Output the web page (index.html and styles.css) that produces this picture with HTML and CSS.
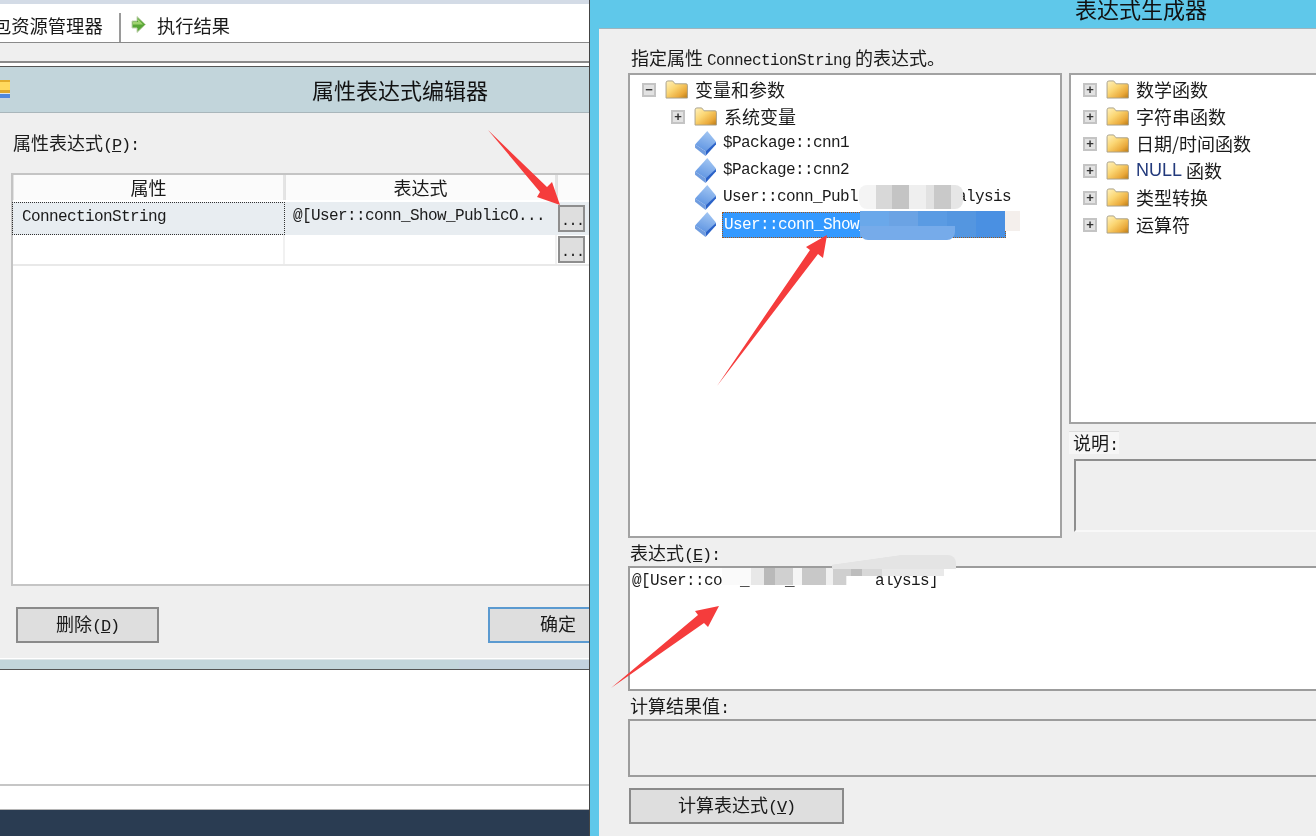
FILE: index.html
```html
<!DOCTYPE html>
<html lang="zh-CN">
<head>
<meta charset="utf-8">
<title>属性表达式编辑器 / 表达式生成器</title>
<link rel="stylesheet" href="styles.css">
</head>
<body>
<svg class="defs" width="0" height="0" aria-hidden="true">
  <defs>
    <linearGradient id="fold" x1="0" y1="0" x2="1" y2="1">
      <stop offset="0" stop-color="#fff2bf"/><stop offset=".4" stop-color="#fbd673"/><stop offset=".75" stop-color="#eaa93a"/><stop offset="1" stop-color="#b97a14"/>
    </linearGradient>
    <linearGradient id="face" x1="0.700" y1="0" x2="0.300" y2="1">
      <stop offset="0" stop-color="#a5c8f3"/><stop offset="1" stop-color="#5e94e2"/>
    </linearGradient>
    <symbol id="folder" viewBox="0 0 24 20">
      <path d="M1 19V3q0-2 2-2h5l2.500 3H22q1.500 0 1.500 1.500V19z" fill="url(#fold)" stroke="#a8a08a" stroke-width="1"/>
    </symbol>
    <symbol id="cube" viewBox="0 0 20 24">
      <path d="M11.700 0L20 10v1L10 19.500 0 13z" fill="url(#face)"/>
      <path d="M20 10.500V13L10 24v-4.500z" fill="#2a62c8"/>
      <path d="M0 13l10 6.500V24L0 16z" fill="#6f9cdf"/>
    </symbol>
  </defs>
</svg>
<main class="screen">
  <section class="editor">
    <div class="strip"></div>
    <div class="tabs">
      <span class="tab tab-first">包资源管理器</span>
      <span class="tab tab-second">
        <svg class="go" viewBox="0 0 15 17"><path d="M6 .5L14.500 8.500 6 16.500V12H1V5h5z" fill="#58a636" stroke="#c6d4b4"/><path d="M7 3l5 5.500H2V6h5z" fill="#9fd36f"/></svg>
        执行结果
      </span>
    </div>
    <div class="toolbar"></div>
    <div class="gap"></div>
    <div class="dialog">
      <header class="dialog-title">
        <span class="dialog-icon"></span>
        <span class="dialog-name">属性表达式编辑器</span>
      </header>
      <div class="dialog-body">
        <div class="label-main">属性表达式<span class="paren">(<u>P</u>):</span></div>
        <div class="table">
          <div class="row row-head">
            <div class="cell">属性</div>
            <div class="cell">表达式</div>
            <div class="cell"></div>
          </div>
          <div class="row row-sel">
            <div class="cell cell-focus">ConnectionString</div>
            <div class="cell cell-exp">@[User::conn_Show_PublicO...</div>
            <div class="cell cell-btn"><span class="dots">...</span></div>
          </div>
          <div class="row row-empty">
            <div class="cell"></div>
            <div class="cell"></div>
            <div class="cell cell-btn"><span class="dots">...</span></div>
          </div>
        </div>
        <div class="actions">
          <button class="btn btn-del">删除<span class="paren">(<u>D</u>)</span></button>
          <button class="btn btn-ok">确定</button>
        </div>
      </div>
      <div class="dialog-foot"></div>
    </div>
    <div class="output"></div>
    <div class="status"></div>
    <div class="taskbar"></div>
  </section>

  <section class="builder">
    <div class="builder-title"><span>表达式生成器</span></div>
    <div class="builder-body">
      <div class="lab lab-top">指定属性 <span class="mono">ConnectionString</span> 的表达式。</div>
      <div class="panes">
        <div class="tree tree-left">
          <div class="node lvl0"><span class="exp">−</span><svg class="ico-folder"><use href="#folder"/></svg>变量和参数</div>
          <div class="node lvl1"><span class="exp">+</span><svg class="ico-folder"><use href="#folder"/></svg>系统变量</div>
          <div class="node lvl2"><svg class="ico-cube"><use href="#cube"/></svg><span class="mono">$Package::cnn1</span></div>
          <div class="node lvl2"><svg class="ico-cube"><use href="#cube"/></svg><span class="mono">$Package::cnn2</span></div>
          <div class="node lvl2"><svg class="ico-cube"><use href="#cube"/></svg><span class="mono">User::conn_Publ<span class="hidden-gap"></span>alysis</span></div>
          <div class="node lvl2"><svg class="ico-cube"><use href="#cube"/></svg><span class="mono selected">User::conn_Show_</span></div>
        </div>
        <div class="side">
          <div class="tree tree-right">
            <div class="node"><span class="exp">+</span><svg class="ico-folder"><use href="#folder"/></svg>数学函数</div>
            <div class="node"><span class="exp">+</span><svg class="ico-folder"><use href="#folder"/></svg>字符串函数</div>
            <div class="node"><span class="exp">+</span><svg class="ico-folder"><use href="#folder"/></svg>日期/时间函数</div>
            <div class="node"><span class="exp">+</span><svg class="ico-folder"><use href="#folder"/></svg><span class="null">NULL</span>&nbsp;函数</div>
            <div class="node"><span class="exp">+</span><svg class="ico-folder"><use href="#folder"/></svg>类型转换</div>
            <div class="node"><span class="exp">+</span><svg class="ico-folder"><use href="#folder"/></svg>运算符</div>
          </div>
          <div class="desc-label">说明<span class="paren">:</span></div>
          <div class="desc-box"></div>
        </div>
      </div>
      <div class="lab lab-exp">表达式<span class="paren">(<u>E</u>):</span></div>
      <div class="expr mono">@[User::co  _    _         alysis]</div>
      <div class="lab lab-res">计算结果值<span class="paren">:</span></div>
      <div class="result"></div>
      <button class="btn btn-eval">计算表达式<span class="paren">(<u>V</u>)</span></button>
    </div>
  </section>

  <div class="mosaic m-row3"></div>
  <div class="mosaic m-row4"></div>
  <div class="mosaic m-row4b"></div>
  <div class="mosaic m-row4c"></div>
  <div class="mosaic m-expr"></div>
  <div class="mosaic m-expr-top"></div>

  <svg class="arrows" viewBox="0 0 1316 836">
    <polygon points="488,130 547,187 552,182 560,205 537,197 540,192"/>
    <polygon points="717,386 810,250 806,247 827,235 823,258 818,254"/>
    <polygon points="611,688 698,615 695,611 719,606 708,627 704,623"/>
  </svg>
</main>
</body>
</html>
```
FILE: styles.css
```css
* { box-sizing: border-box; }
html, body { margin: 0; height: 100%; overflow: hidden; background: #5fc8ea; }
body { font-family: "Noto Sans CJK SC", "Liberation Sans", sans-serif; font-size: 18px; color: #1a1a1a; }
u { text-decoration-thickness: 1px; text-underline-offset: 1px; }
.defs { position: absolute; }
.mono { font-family: "Liberation Mono", "Noto Sans CJK SC", monospace; font-size: 16px; letter-spacing: -.6px; }
.paren { font-family: "Liberation Mono", monospace; font-size: 17px; letter-spacing: -1.200px; }

.screen { position: relative; display: flex; width: 1316px; height: 836px; overflow: hidden; filter: blur(.35px); }

/* left window */
.editor { width: 590px; flex: none; display: flex; flex-direction: column; background: #fff; border-right: 1px solid #444; overflow: hidden; }
.strip { height: 4px; background: #d3dbe6; }
.tabs { height: 39px; display: flex; align-items: center; background: #fff; border-bottom: 1px solid #8a8a8a; }
.tab { display: flex; align-items: center; height: 29px; margin-top: 9px; padding-bottom: 6px; line-height: 24px; white-space: nowrap; }
.tab-first { margin-left: -7px; width: 128px; border-right: 2px solid #9a9a9a; font-size: 18.300px; }
.tab-second { padding-left: 10px; gap: 11px; font-size: 18.300px; }
.go { width: 15px; height: 17px; }
.toolbar { height: 20px; background: #efefef; border-bottom: 2px solid #8a8a8a; }
.gap { height: 3px; background: #fff; }
.dialog { height: 603px; display: flex; flex-direction: column; border-top: 1px solid #555; }
.dialog-title { height: 46px; flex: none; display: flex; align-items: center; background: #c2d5db; border-bottom: 1px solid #a9b6bb; position: relative; padding-left: 312px; }
.dialog-name { font-size: 22px; line-height: 30px; margin-top: -1px; color: #111; }
.dialog-icon { position: absolute; left: 0; top: 13px; width: 10px; height: 19px; background: linear-gradient(#e2ac2c 0 2px, #ffd95e 2px 10px, #dca52c 10px 13px, #dfe6e8 13px 14px, #4f86dc 14px 18px, #c6d2e0 18px); }
.dialog-body { flex: 1; background: #efefef; padding: 0 0 0 11px; display: flex; flex-direction: column; }
.label-main { height: 60px; padding: 16px 0 0 2px; line-height: 27px; }
.table { height: 413px; margin-right: -6px; background: #fff; border: 2px solid #c4c4c4; border-right: 0; flex: none; }
.row { display: grid; grid-template-columns: 272px 272px 40px; }
.row-head { height: 25px; background: #e2e2e2; }
.row-head .cell { background: #fbfbfb; text-align: center; line-height: 25px; border-right: 2px solid #e4e4e4; margin-left: 1px; font-size: 18px; }
.row-sel { height: 33px; margin-top: 2px; background: #e8edf1; }
.row-empty { height: 31px; border-bottom: 2px solid #e9e9e9; }
.row-empty .cell { border-right: 2px solid #f1f1f1; }
.row-empty .cell-btn { border: 0; }
.cell { min-width: 0; overflow: hidden; white-space: nowrap; }
.cell-focus, .cell-exp { font-family: "Liberation Mono", monospace; font-size: 16px; letter-spacing: -.6px; line-height: 29px; }
.cell-focus { border: 1px dotted #333; margin-left: -1px; padding-left: 9px; height: 33px; }
.cell-exp { padding-left: 8px; }
.cell-btn { padding: 3px 0 0 1px; overflow: visible; }
.row-empty .cell-btn { padding-top: 1px; }
.dots { display: block; width: 27px; height: 27px; overflow: visible; padding-left: 1px; background: #dedede; border: 2px solid #8e8e8e; font: 15px/29px "Liberation Mono", monospace; letter-spacing: -1.500px; text-align: left; }
.actions { display: flex; justify-content: space-between; margin-top: 21px; padding-left: 5px; margin-right: -60px; }
.btn { display: block; height: 36px; padding: 0 0 4px; background: #dedede; border: 2px solid #8a8a8a; font: 18px/28px "Noto Sans CJK SC", sans-serif; color: #1a1a1a; }
.btn-del { width: 143px; }
.btn-ok { width: 161px; border-color: #5b9ad0; text-align: left; padding-left: 50px; }
.dialog-foot { height: 10px; flex: none; margin-top: 1px; background: linear-gradient(90deg, #c2d5db 78%, #c4d2de 78%); border-top: 1px solid #dfe6e8; }
.output { height: 117px; border-top: 1px solid #555; border-bottom: 2px solid #c6c6c6; flex: none; }
.status { height: 24px; flex: none; border-bottom: 1px solid #b5b5b5; }
.taskbar { flex: 1; background: #2a3c52; }

/* right window */
.builder { flex: 1; min-width: 0; padding-left: 9px; display: flex; flex-direction: column; background: #5fc8ea; }
.builder-title { height: 28px; flex: none; margin-left: -9px; padding-left: 485px; overflow: hidden; }
.builder-title span { display: block; font-size: 22px; line-height: 22px; margin-top: -3px; color: #111; white-space: nowrap; }
.builder-body { flex: 1; background: #efefef; border-top: 1px solid #9fb4bd; padding-left: 29px; display: flex; flex-direction: column; margin-right: -6px; }
.lab { line-height: 24px; white-space: nowrap; }
.lab-top { height: 44px; padding: 16px 0 0 3px; font-size: 18px; }
.panes { display: flex; gap: 7px; height: 465px; flex: none; }
.tree { background: #fff; border: 2px solid #a2a2a2; padding-top: 1px; }
.tree-left { width: 434px; height: 465px; flex: none; }
.side { flex: 1; min-width: 0; }
.tree-right { height: 351px; }
.node { display: flex; align-items: center; height: 27px; white-space: nowrap; line-height: 27px; }
.exp { width: 14px; height: 14px; flex: none; display: flex; align-items: center; justify-content: center; background: #e2e2e2; border: 2px solid #c4c4c4; font: bold 13px/1 "Liberation Sans", sans-serif; color: #333; margin-right: 9px; }
.ico-folder { width: 23px; height: 19px; flex: none; margin-right: 7px; }
.ico-cube { width: 21px; height: 25px; flex: none; margin-right: 7px; }
.lvl0 { padding-left: 12px; }
.lvl1 { padding-left: 41px; }
.lvl2 { padding-left: 65px; }
.tree-right .node { padding-left: 12px; }
.hidden-gap { display: inline-block; width: 99px; }
.selected { display: block; width: 284px; height: 26px; margin-left: -1px; padding-left: 2px; background: #3399ff; color: #fff; line-height: 26px; outline: 1px dotted #a0561c; outline-offset: -1px; }
.null { font-family: "Liberation Sans", sans-serif; color: #233a7c; }
.desc-label { width: 50px; height: 23px; margin-top: 7px; padding-left: 4px; line-height: 21px; background: #f6f6f6; border-top: 1px solid #dcdcdc; }
.desc-box { height: 73px; margin: 5px 0 0 5px; border: 2px solid #8e8e8e; border-right: 0; border-bottom: 2px solid #f8f8f8; }
.lab-exp { height: 28px; padding: 2px 0 0 2px; }
.expr { height: 125px; flex: none; background: #fff; border: 2px solid #9c9c9c; padding: 2px 0 0 2px; line-height: 22px; white-space: pre; }
.lab-res { height: 28px; padding: 2px 0 0 2px; }
.result { height: 58px; flex: none; border: 2px solid #9c9c9c; }
.btn-eval { width: 215px; height: 36px; margin: 11px 0 0 1px; }

/* overlays */
.mosaic { position: absolute; }
.m-row3 { left: 859px; top: 185px; width: 104px; height: 24px; border-radius: 8px; background: linear-gradient(90deg, #f4f4f4 0 16%, #d8d8d8 16% 32%, #c4c4c4 32% 48%, #efefef 48% 64%, #e2e2e2 64% 72%, #c9c9c9 72% 88%, #e6e6e6 88%); }
.m-row4 { left: 860px; top: 211px; width: 145px; height: 26px; background: linear-gradient(90deg, #6aa8ea 0 20%, #6ba3e4 20% 40%, #5a9be3 40% 60%, #5496e0 60% 80%, #4a90e2 80%); }
.m-row4b { left: 1005px; top: 211px; width: 15px; height: 20px; background: #f4efec; }
.m-row4c { left: 860px; top: 226px; width: 95px; height: 14px; border-radius: 0 0 8px 8px; background: #76abea; }
.m-expr { left: 722px; top: 568px; width: 222px; height: 17px; clip-path: polygon(0 0, 100% 0, 100% 8px, 56% 8px, 56% 100%, 0 100%); background: linear-gradient(90deg, #fafafa 0 13%, #e8e8e8 13% 19%, #b9b9b9 19% 24%, #d0d0d0 24% 32%, #f5f5f5 32% 36%, #c8c8c8 36% 47%, #f0f0f0 47% 50%, #cfcfcf 50% 58%, #bdbdbd 58% 63%, #d8d8d8 63% 72%, #e9e9e9 72% 100%); }
.m-expr-top { left: 832px; top: 555px; width: 124px; height: 14px; border-radius: 8px 8px 0 0; background: linear-gradient(172deg, transparent 0 30%, #e4e4e4 32%); }
.arrows { position: absolute; inset: 0; width: 1316px; height: 836px; pointer-events: none; }
.arrows polygon { fill: #f53c3c; }
```
